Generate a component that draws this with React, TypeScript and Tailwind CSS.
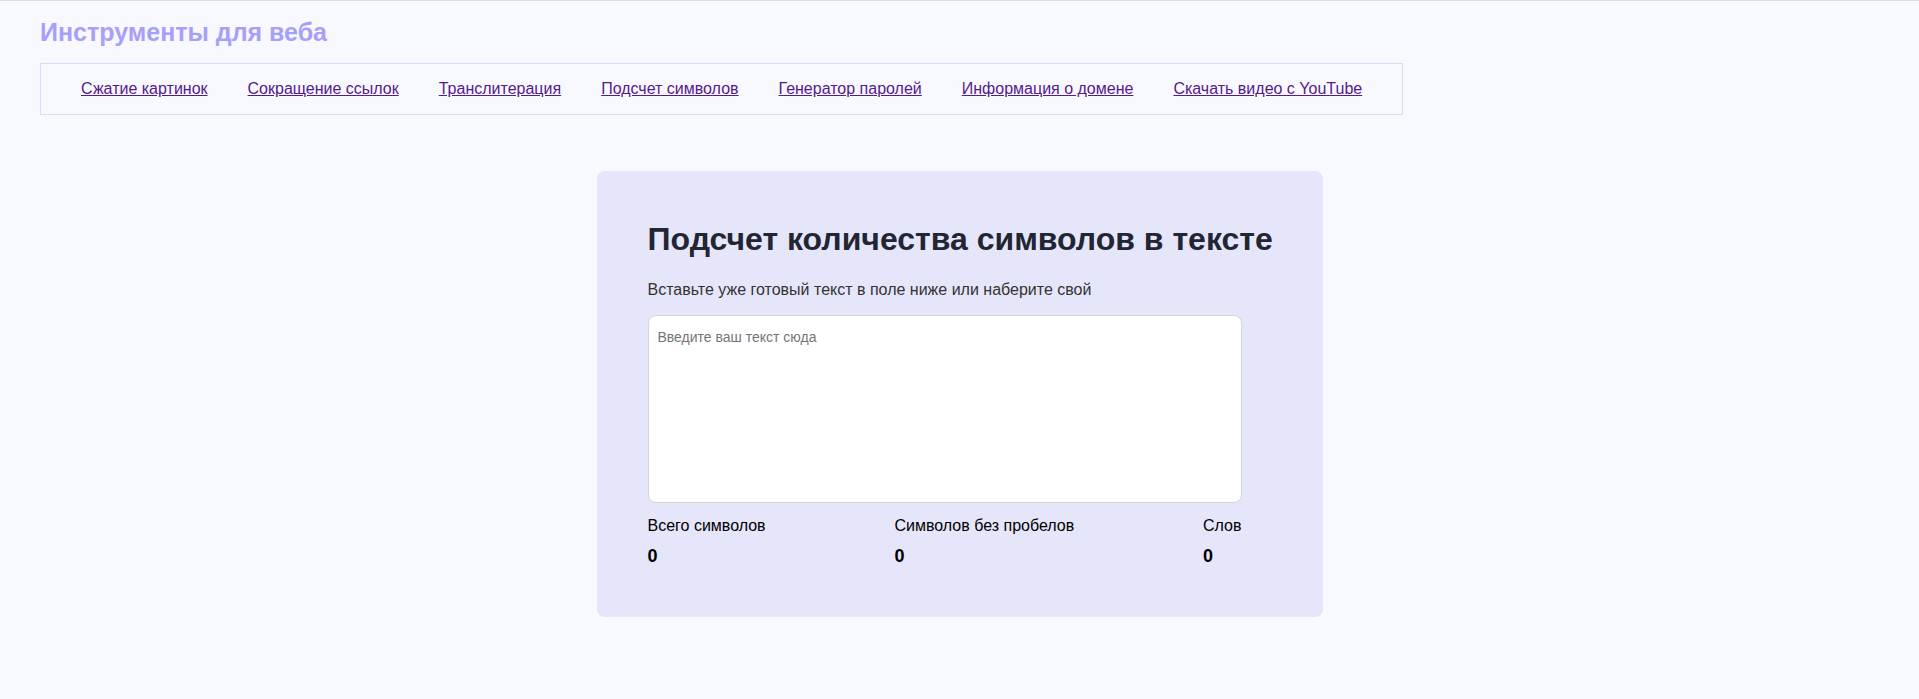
import React from "react";

const links = [
  "Сжатие картинок",
  "Сокращение ссылок",
  "Транслитерация",
  "Подсчет символов",
  "Генератор паролей",
  "Информация о домене",
  "Скачать видео с YouTube",
];

export default function App() {
  return (
    <div className="min-h-screen bg-[#f8f8ff] border-t border-[#dcdcdc] font-['Liberation_Sans',Arial,sans-serif]">
      <header className="px-[40px] pt-[17px]">
        <h1 className="text-[25px] font-bold text-[#a6a0fa] leading-[28.7px]">
          Инструменты для веба
        </h1>
        <nav className="mt-[16px] w-fit h-[52px] border border-[#dcd9fa] flex items-center gap-[40px] px-[40px]">
          {links.map((l) => (
            <a
              key={l}
              href="#"
              className="text-[16px] leading-[18.4px] text-[#551a8b] underline whitespace-nowrap"
            >
              {l}
            </a>
          ))}
        </nav>
      </header>
      <main className="flex justify-center pt-[56px]">
        <div className="w-[726px] bg-[#e6e6fa] rounded-[8px] px-[51px] pt-[50px] pb-[51px]">
          <h2 className="text-[32px] font-bold leading-[37px] text-[#222533] whitespace-nowrap">
            Подсчет количества символов в тексте
          </h2>
          <p className="mt-[23px] text-[16px] leading-[18.4px] text-[#333]">
            Вставьте уже готовый текст в поле ниже или наберите свой
          </p>
          <div className="w-[594px] mt-[16px]">
            <textarea
              placeholder="Введите ваш текст сюда"
              className="block w-[594px] h-[188px] bg-white border border-[#d6d6d6] rounded-[8px] px-[9px] py-[10px] text-[14px] leading-[22px] text-[#222] placeholder:text-[#757575] resize-none outline-none font-['Liberation_Sans',Arial,sans-serif]"
            />
            <div className="mt-[14px] flex justify-between text-black">
              {[
                "Всего символов",
                "Символов без пробелов",
                "Слов",
              ].map((t) => (
                <div key={t}>
                  <div className="text-[16px] leading-[18.4px]">{t}</div>
                  <div className="mt-[10px] text-[18px] font-bold leading-[20.7px]">0</div>
                </div>
              ))}
            </div>
          </div>
        </div>
      </main>
    </div>
  );
}
